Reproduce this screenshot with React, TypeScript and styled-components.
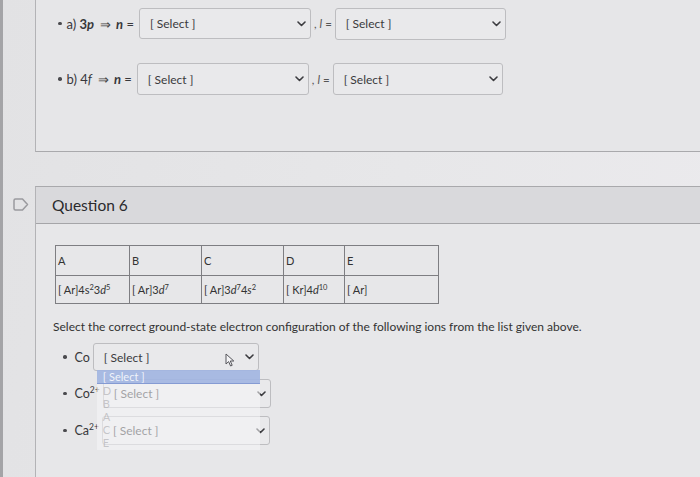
import React from "react";
import styled, { createGlobalStyle } from "styled-components";

const Global = createGlobalStyle`
  html, body { margin: 0; padding: 0; background: #e4e4e6; }
  body { font-family: Lato, "Open Sans", "Liberation Sans", sans-serif; color: #353538; }
  #root { width: 700px; height: 477px; }
`;

const Page = styled.div`
  width: 700px;
  height: 477px;
  overflow: hidden;
  display: flex;
  background: linear-gradient(100deg, #e2e2e4 0%, #e7e7e9 55%, #ebeaed 100%);
`;

const LeftStrip = styled.div`
  width: 3px;
  flex: none;
  background: #a4a4a7;
`;

const Column = styled.div`
  flex: 1;
  display: flex;
  flex-direction: column;
`;

const Section = styled.div<{ $top?: number; $grow?: boolean }>`
  display: flex;
  margin-top: ${(p) => p.$top ?? 0}px;
  flex: ${(p) => (p.$grow ? 1 : "none")};
`;

const Gutter = styled.div`
  width: 32px;
  flex: none;
  padding: 9px 0 0 10px;
  box-sizing: border-box;
`;

const TopPanel = styled.div`
  flex: 1;
  height: 151px;
  border-left: 1px solid #b3b3b6;
  border-bottom: 1px solid #a9a9ac;
  background: #e6e6e8;
`;

const QPanel = styled.div`
  flex: 1;
  border-left: 1px solid #b3b3b6;
  border-top: 1px solid #a9a9ac;
  display: flex;
  flex-direction: column;
  background: #e7e7e9;
`;

const Header = styled.div`
  height: 36px;
  background: #d9d9dc;
  border-bottom: 1px solid #a5a5a8;
  display: flex;
  align-items: center;
  padding-left: 16px;
  font-size: 15.5px;
  color: #2a2a2d;
`;

const Body = styled.div`
  padding: 21px 0 0 17px;
`;

const BulletList = styled.ul<{ $pad: number; $top: number; $gap: number }>`
  list-style: none;
  margin: 0;
  padding: ${(p) => p.$top}px 0 0 ${(p) => p.$pad}px;
  display: flex;
  flex-direction: column;
  gap: ${(p) => p.$gap}px;
`;

const Item = styled.li<{ $h: number; $bgap: number; $fs: number }>`
  display: flex;
  align-items: center;
  height: ${(p) => p.$h}px;
  font-size: ${(p) => p.$fs}px;
  white-space: nowrap;
  &::before {
    content: "";
    width: 3.5px;
    height: 3.5px;
    border-radius: 50%;
    background: #4a4a4e;
    margin-right: ${(p) => p.$bgap}px;
    flex: none;
  }
`;

const Label = styled.span<{ $mr?: number }>`
  margin-right: ${(p) => p.$mr ?? 3}px;
  color: #38383b;
  & sup { font-size: 8.5px; vertical-align: 5px; line-height: 0; }
`;

const Arrow = styled.span`
  margin: 0 5px 0 6px;
  color: #444;
`;

const Sep = styled.span`
  margin: 0 3px 0 3px;
  font-size: 11.5px;
  color: #555;
`;

const SelectBox = styled.div<{ $w: number; $h: number }>`
  position: relative;
  width: ${(p) => p.$w}px;
  height: ${(p) => p.$h}px;
  box-sizing: border-box;
  border: 1px solid #bdbdc0;
  border-radius: 3px;
  background: #e9e9eb;
  display: flex;
  align-items: center;
  justify-content: space-between;
  padding: 0 4px 0 10px;
  font-size: 12px;
  color: #3a3a3d;
`;

const Chevron = () => (
  <svg width="9" height="6" viewBox="0 0 9 6" aria-hidden="true">
    <path d="M1 1 L4.5 4.5 L8 1" fill="none" stroke="#3c3c40" strokeWidth="1.6" strokeLinecap="round" strokeLinejoin="round" />
  </svg>
);

const Select: React.FC<{ w: number; h: number; children?: React.ReactNode }> = ({ w, h, children }) => (
  <SelectBox $w={w} $h={h}>
    <span>[ Select ]</span>
    <Chevron />
    {children}
  </SelectBox>
);

const Table = styled.table`
  border-collapse: collapse;
  margin-left: 2px;
  font-size: 11px;
  color: #333;
`;

const Cell = styled.td<{ $w: number; $h: number }>`
  width: ${(p) => p.$w}px;
  height: ${(p) => p.$h}px;
  border: 1px solid #7e7e82;
  padding: 0 0 0 2px;
  box-sizing: border-box;
  white-space: nowrap;
  & sup { font-size: 7.5px; vertical-align: 4px; line-height: 0; }
`;

const Para = styled.p`
  margin: 15px 0 0 0;
  font-size: 12px;
  line-height: 16px;
  color: #333;
`;

const Dropdown = styled.div`
  position: absolute;
  top: 100%;
  left: 3px;
  width: 163px;
  height: 80px;
  background: rgba(246, 246, 248, 0.55);
  display: flex;
  flex-direction: column;
  z-index: 2;
`;

const Option = styled.div<{ $active?: boolean }>`
  height: 13px;
  line-height: 13px;
  padding-left: 6px;
  font-size: 11px;
  color: ${(p) => (p.$active ? "rgba(255,255,255,0.85)" : "rgba(160,160,165,0.55)")};
  background: ${(p) => (p.$active ? "rgba(150,172,222,0.8)" : "transparent")};
  border-bottom: ${(p) => (p.$active ? "1px solid rgba(110,135,200,0.6)" : "none")};
`;

const Cursor = styled.svg`
  position: absolute;
  left: 131px;
  top: 9px;
  z-index: 3;
`;

const FlagIcon = () => (
  <svg width="16" height="13" viewBox="0 0 16 13" aria-hidden="true">
    <path d="M2.5 1 H9.5 L14.5 6.5 L9.5 12 H2.5 Q1 12 1 10.5 V2.5 Q1 1 2.5 1 Z" fill="none" stroke="#9a9a9e" strokeWidth="1.5" strokeLinejoin="round" />
  </svg>
);

export default function App() {
  return (
    <>
      <Global />
      <Page>
        <LeftStrip />
        <Column>
          <Section>
            <Gutter />
            <TopPanel>
              <BulletList $pad={22} $top={8} $gap={24}>
                <Item $h={31} $bgap={5} $fs={13}>
                  <Label $mr={5}>
                    a) <b>3<i>p</i></b><Arrow>⇒</Arrow><b><i>n</i></b> =
                  </Label>
                  <Select w={172} h={31} />
                  <Sep>
                    , <i>l</i> =
                  </Sep>
                  <Select w={171} h={32} />
                </Item>
                <Item $h={32} $bgap={5} $fs={13}>
                  <Label $mr={5}>
                    b) 4<i>f</i><Arrow>⇒</Arrow><b><i>n</i></b> =
                  </Label>
                  <Select w={172} h={32} />
                  <Sep>
                    , <i>l</i> =
                  </Sep>
                  <Select w={170} h={32} />
                </Item>
              </BulletList>
            </TopPanel>
          </Section>

          <Section $top={34} $grow>
            <Gutter>
              <FlagIcon />
            </Gutter>
            <QPanel>
              <Header>Question 6</Header>
              <Body>
                <Table>
                  <tbody>
                    <tr>
                      <Cell $w={74} $h={30}>A</Cell>
                      <Cell $w={72} $h={30}>B</Cell>
                      <Cell $w={82} $h={30}>C</Cell>
                      <Cell $w={61} $h={30}>D</Cell>
                      <Cell $w={94} $h={30}>E</Cell>
                    </tr>
                    <tr>
                      <Cell $w={74} $h={28}>
                        [ Ar]4s<sup>2</sup>3<i>d</i><sup>5</sup>
                      </Cell>
                      <Cell $w={72} $h={28}>
                        [ Ar]3<i>d</i><sup>7</sup>
                      </Cell>
                      <Cell $w={82} $h={28}>
                        [ Ar]3<i>d</i><sup>7</sup>4<i>s</i><sup>2</sup>
                      </Cell>
                      <Cell $w={61} $h={28}>
                        [ Kr]4<i>d</i><sup>10</sup>
                      </Cell>
                      <Cell $w={94} $h={28}>[ Ar]</Cell>
                    </tr>
                  </tbody>
                </Table>
                <Para>
                  Select the correct ground-state electron configuration of the following ions from the list given above.
                </Para>
                <BulletList $pad={10} $top={8} $gap={8}>
                  <Item $h={28} $bgap={8} $fs={12.5}>
                    <Label>Co</Label>
                    <Select w={166} h={28}>
                      <Cursor width="10" height="14" viewBox="0 0 10 14" aria-hidden="true">
                        <path d="M1 1 V11 L3.6 8.6 L5.6 13 L7.2 12.3 L5.3 8 H8.8 Z" fill="#f4f4f6" stroke="#55555a" strokeWidth="1" strokeLinejoin="round" />
                      </Cursor>
                      <Dropdown>
                        <Option $active>[ Select ]</Option>
                        <Option>D</Option>
                        <Option>B</Option>
                        <Option>A</Option>
                        <Option>C</Option>
                        <Option>E</Option>
                      </Dropdown>
                    </Select>
                  </Item>
                  <Item $h={29} $bgap={8} $fs={12.5}>
                    <Label>
                      Co<sup>2+</sup>
                    </Label>
                    <Select w={168} h={29} />
                  </Item>
                  <Item $h={29} $bgap={8} $fs={12.5}>
                    <Label>
                      Ca<sup>2+</sup>
                    </Label>
                    <Select w={168} h={29} />
                  </Item>
                </BulletList>
              </Body>
            </QPanel>
          </Section>
        </Column>
      </Page>
    </>
  );
}
